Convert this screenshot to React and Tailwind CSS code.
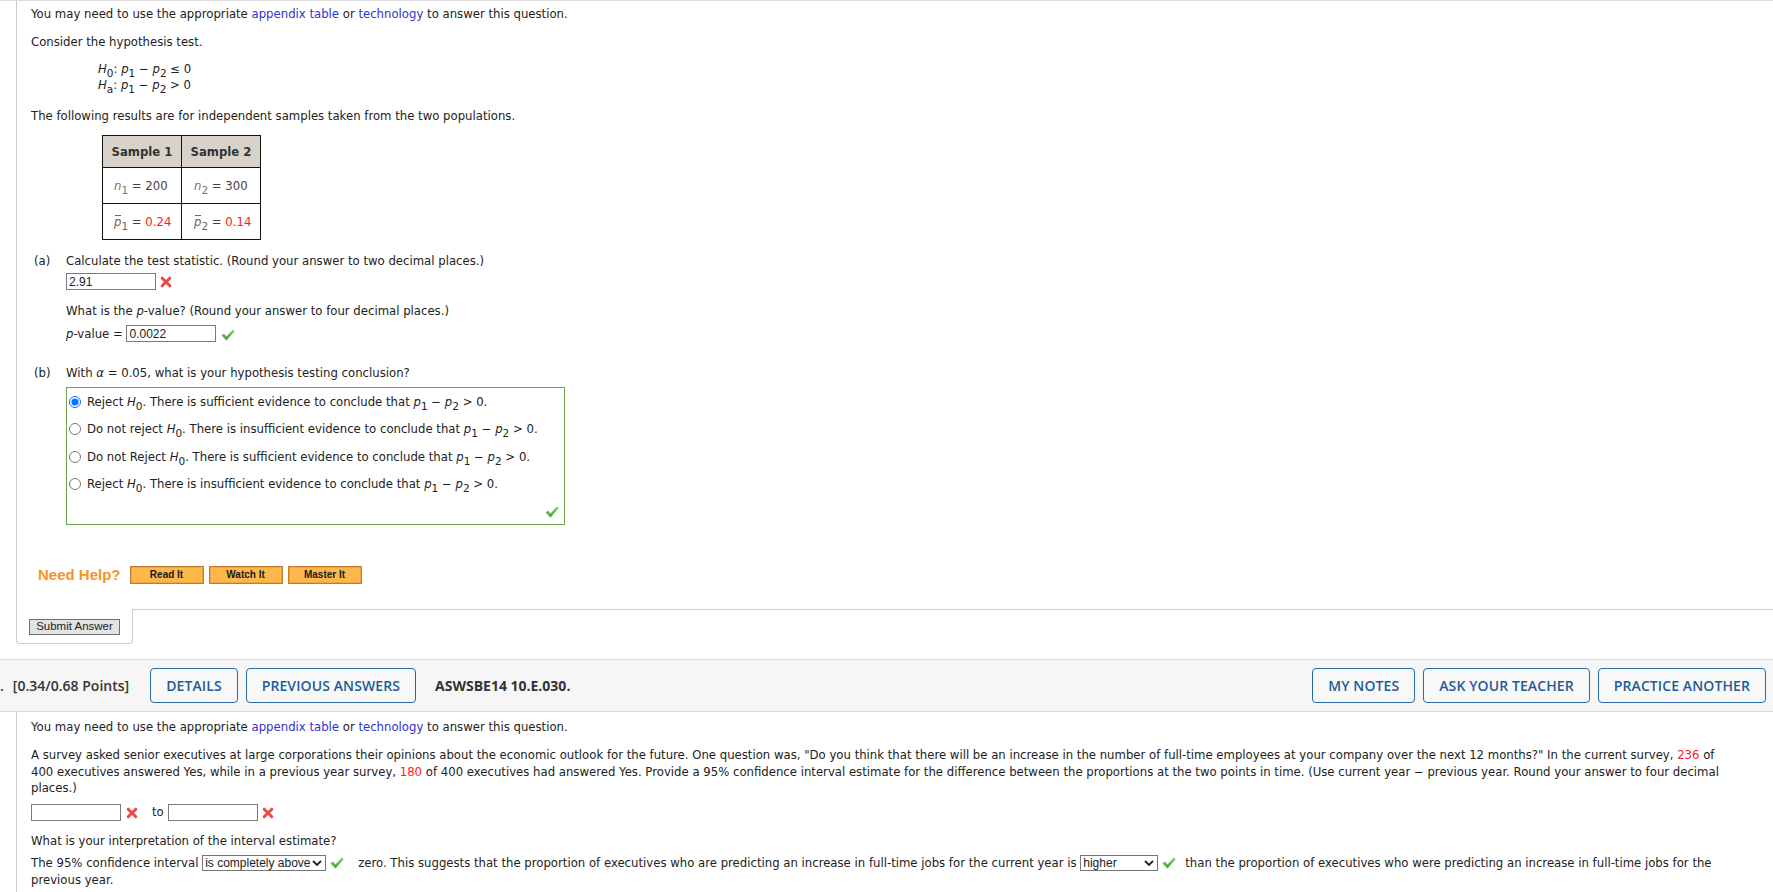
import React from "react";

const Check = ({ className = "" }) => (
  <svg viewBox="0 0 14 12" className={`inline-block w-[14px] h-[12px] ${className}`}>
    <defs>
      <linearGradient id="chk" x1="0" y1="0" x2="0" y2="1">
        <stop offset="0" stopColor="#8fd16a" />
        <stop offset="1" stopColor="#3f9a36" />
      </linearGradient>
    </defs>
    <path d="M0.6 6.6 L2.9 4.6 L5.4 7.4 L11.9 0.6 L13.6 2.2 L5.5 11.4 Z" fill="url(#chk)" />
  </svg>
);

const Cross = ({ className = "" }) => (
  <svg viewBox="0 0 12 12" className={`inline-block w-[12px] h-[12px] ${className}`}>
    <path d="M2.2 2.2 L9.8 9.8 M9.8 2.2 L2.2 9.8" stroke="#ec4b45" strokeWidth="3" strokeLinecap="round" />
  </svg>
);

// italic variable with a dropped subscript
const V = ({ v, s }) => (
  <>
    <i>{v}</i>
    <span className="relative top-[4px] text-[10.5px] leading-none">{s}</span>
  </>
);

const PBar = ({ s }) => (
  <>
    <span className="relative italic">
      p
      <span className="absolute left-[1px] right-[0px] top-[0px] h-px bg-[#666]" />
    </span>
    <span className="relative top-[4px] text-[10.5px] leading-none">{s}</span>
  </>
);

const Diff = () => (
  <>
    <V v="p" s="1" /> − <V v="p" s="2" /> &gt; 0.
  </>
);

const TextInput = ({ value = "" }) => (
  <input
    readOnly
    defaultValue={value}
    className="w-[90px] h-[17px] border border-[#7a7a7a] px-[2px] text-[12px] leading-none text-[#222] font-['Liberation_Sans',Arial,sans-serif] align-middle outline-none"
  />
);

const Select = ({ label, w }) => (
  <span
    className={`inline-flex items-center justify-between ${w} h-[16px] border border-[#767676] bg-white pl-[2px] pr-[3px] align-middle text-[12px] leading-none text-[#222] font-['Liberation_Sans',Arial,sans-serif]`}
  >
    <span>{label}</span>
    <svg viewBox="0 0 10 6" className="w-[10px] h-[6px]">
      <path d="M1 1 L5 5 L9 1" fill="none" stroke="#222" strokeWidth="1.8" />
    </svg>
  </span>
);

const HelpBtn = ({ label }) => (
  <button className="w-[74px] h-[18px] border border-[#c47a2c] bg-[#fdb84b] shadow-[inset_0_0_0_1px_#f4a43c] text-[10px] font-bold text-[#1a1a1a] font-['Liberation_Sans',Arial,sans-serif] leading-none">
    {label}
  </button>
);

const BarBtn = ({ label }) => (
  <button className="h-[35px] px-[15px] border border-[#2a6aa0] rounded-[4px] bg-[#f8f8f8] text-[14px] font-semibold text-[#1e5c97] tracking-[0.1px]">
    {label}
  </button>
);

const radios = [
  { pre: "Reject ", post: "There is sufficient evidence to conclude that ", on: true },
  { pre: "Do not reject ", post: "There is insufficient evidence to conclude that " },
  { pre: "Do not Reject ", post: "There is sufficient evidence to conclude that " },
  { pre: "Reject ", post: "There is insufficient evidence to conclude that " },
];

export default function App() {
  return (
    <div className="w-full min-h-screen bg-white text-[#222] text-[11.7px] leading-[16px] font-['DejaVu_Sans',Verdana,sans-serif]">
      <div className="border-t border-[#dcdcdc]">
        {/* question box */}
        <div className="ml-4 border-l border-[#cccccc] pl-[14px] pt-[5px] pb-[25px]">
          <p>
            You may need to use the appropriate <span className="text-[#3333cc]">appendix table</span> or{" "}
            <span className="text-[#3333cc]">technology</span> to answer this question.
          </p>
          <p className="mt-[12px]">Consider the hypothesis test.</p>
          <div className="mt-[11px] pl-[67px]">
            <div>
              <V v="H" s="0" />: <V v="p" s="1" /> − <V v="p" s="2" /> ≤ 0
            </div>
            <div>
              <V v="H" s="a" />: <V v="p" s="1" /> − <V v="p" s="2" /> &gt; 0
            </div>
          </div>
          <p className="mt-[15px]">The following results are for independent samples taken from the two populations.</p>

          <table className="mt-[11px] ml-[71px] border-collapse text-[#444]">
            <thead>
              <tr className="h-[32px] bg-[#d7d3ca]">
                <th className="w-[79px] border border-[#111] font-bold text-[#333] text-center">Sample 1</th>
                <th className="w-[79px] border border-[#111] font-bold text-[#333] text-center">Sample 2</th>
              </tr>
            </thead>
            <tbody>
              <tr className="h-[36px]">
                <td className="border border-[#111] pl-[11px]">
                  <span className="text-[#777]"><V v="n" s="1" /></span> = 200
                </td>
                <td className="border border-[#111] pl-[12px]">
                  <span className="text-[#777]"><V v="n" s="2" /></span> = 300
                </td>
              </tr>
              <tr className="h-[36px]">
                <td className="border border-[#111] pl-[11px]">
                  <span className="text-[#666]"><PBar s="1" /></span> = <span className="text-[#ff1a1a]">0.24</span>
                </td>
                <td className="border border-[#111] pl-[12px]">
                  <span className="text-[#666]"><PBar s="2" /></span> = <span className="text-[#ff1a1a]">0.14</span>
                </td>
              </tr>
            </tbody>
          </table>

          {/* part a */}
          <div className="mt-[13px] flex pl-[3px]">
            <span className="w-[32px] shrink-0">(a)</span>
            <div>
              <p>Calculate the test statistic. (Round your answer to two decimal places.)</p>
              <div className="mt-[4px] flex items-center h-[17px]">
                <TextInput value="2.91" />
                <Cross className="ml-[4px] mt-[1px]" />
              </div>
              <p className="mt-[13px]">
                What is the <i>p</i>-value? (Round your answer to four decimal places.)
              </p>
              <div className="mt-[6px] flex items-center h-[17px]">
                <span>
                  <i>p</i>-value =&nbsp;
                </span>
                <TextInput value="0.0022" />
                <Check className="ml-[5px] mt-[3px]" />
              </div>
            </div>
          </div>

          {/* part b */}
          <div className="mt-[23px] flex pl-[3px]">
            <span className="w-[32px] shrink-0">(b)</span>
            <div>
              <p>
                With <i>α</i> = 0.05, what is your hypothesis testing conclusion?
              </p>
              <div className="mt-[6px] w-[499px] border border-[#6ea646]">
                {radios.map((r, i) => (
                  <label key={i} className="flex items-center h-[27.5px]">
                    <input
                      type="radio"
                      name="concl"
                      defaultChecked={!!r.on}
                      className="ml-[2px] m-0 w-[12px] h-[12px] shrink-0"
                    />
                    <span className="ml-[6px]">
                      {r.pre}
                      <V v="H" s="0" />. {r.post}
                      <Diff />
                    </span>
                  </label>
                ))}
                <div className="mt-[8px] pb-[6px] pr-[5px] flex justify-end">
                  <Check />
                </div>
              </div>
            </div>
          </div>

          {/* need help */}
          <div className="mt-[41px] pl-[7px] flex items-center">
            <span className="text-[15px] font-bold text-[#f7941e] font-['Liberation_Sans',Arial,sans-serif]">Need Help?</span>
            <div className="ml-[9px] flex gap-[5px]">
              <HelpBtn label="Read It" />
              <HelpBtn label="Watch It" />
              <HelpBtn label="Master It" />
            </div>
          </div>
        </div>

        {/* submit row */}
        <div className="flex">
          <div className="ml-4 w-[117px] h-[35px] border-l border-r border-b border-[#cccccc] rounded-b-[4px] pl-[12px] pt-[9px]">
            <button className="w-[91px] h-[16px] border border-[#707070] bg-[#e3e3e3] text-[11.5px] leading-none text-[#222] font-['Liberation_Sans',Arial,sans-serif]">
              Submit Answer
            </button>
          </div>
          <div className="flex-1 border-t border-[#cccccc]" />
        </div>

        {/* next question header */}
        <div className="mt-[15px] border-t border-b border-[#dcdcdc] bg-[#f6f6f6] py-[8px] flex items-center font-['Open_Sans',sans-serif] text-[14px] overflow-hidden">
          <span className="-ml-[8px] font-semibold text-[#333]">2.</span>
          <span className="ml-[9px] font-semibold text-[#333]">[0.34/0.68 Points]</span>
          <div className="ml-[21px] flex gap-[8px]">
            <BarBtn label="DETAILS" />
            <BarBtn label="PREVIOUS ANSWERS" />
          </div>
          <span className="ml-[19px] font-bold text-[#333]">ASWSBE14 10.E.030.</span>
          <div className="ml-auto mr-[7px] flex gap-[8px]">
            <BarBtn label="MY NOTES" />
            <BarBtn label="ASK YOUR TEACHER" />
            <BarBtn label="PRACTICE ANOTHER" />
          </div>
        </div>

        {/* next question body */}
        <div className="ml-4 border-l border-[#cccccc] pl-[14px] pr-[38px] pt-[7px] pb-[20px]">
          <p>
            You may need to use the appropriate <span className="text-[#3333cc]">appendix table</span> or{" "}
            <span className="text-[#3333cc]">technology</span> to answer this question.
          </p>
          <p className="mt-[12px] leading-[16.5px]">
            A survey asked senior executives at large corporations their opinions about the economic outlook for the
            future. One question was, "Do you think that there will be an increase in the number of full-time employees
            at your company over the next 12 months?" In the current survey, <span className="text-[#ff1a1a]">236</span>{" "}
            of 400 executives answered Yes, while in a previous year survey, <span className="text-[#ff1a1a]">180</span> of
            400 executives had answered Yes. Provide a 95% confidence interval estimate for the difference between the
            proportions at the two points in time. (Use current year − previous year. Round your answer to four decimal
            places.)
          </p>
          <div className="mt-[7px] flex items-center h-[17px]">
            <TextInput />
            <Cross className="ml-[5px] mt-[1px]" />
            <span className="ml-[14px]">to</span>
            <span className="ml-[4px]">
              <TextInput />
            </span>
            <Cross className="ml-[4px] mt-[1px]" />
          </div>
          <p className="mt-[12px]">What is your interpretation of the interval estimate?</p>
          <p className="mt-[6px] leading-[17px]">
            The 95% confidence interval <Select label="is completely above" w="w-[124px]" />
            <Check className="ml-[4px] align-middle" />
            <span className="ml-[14px]">
              zero. This suggests that the proportion of executives who are predicting an increase in full-time jobs for
              the current year is{" "}
            </span>
            <Select label="higher" w="w-[78px]" />
            <Check className="ml-[4px] align-middle" />
            <span className="ml-[9px]">
              than the proportion of executives who were predicting an increase in full-time jobs for the previous year.
            </span>
          </p>
        </div>
      </div>
    </div>
  );
}
